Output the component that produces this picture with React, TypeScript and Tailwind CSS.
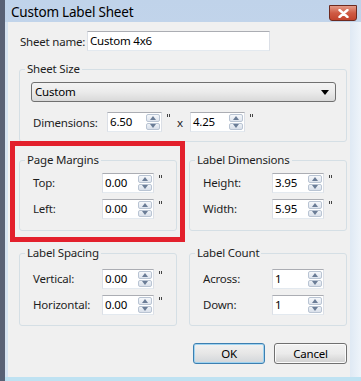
import React from 'react';

function Spinner() {
  return (
    <div className="flex w-[15px] flex-col gap-px py-px pr-px">
      <div className="flex flex-1 items-center justify-center rounded-[2px] border border-[#b9c4d3] bg-gradient-to-b from-[#f6f8fb] to-[#dfe5ee]">
        <svg width="6" height="4" viewBox="0 0 6 4">
          <path d="M3 0 6 4H0z" fill="#6a7c96" />
        </svg>
      </div>
      <div className="flex flex-1 items-center justify-center rounded-[2px] border border-[#b9c4d3] bg-gradient-to-b from-[#eef2f7] to-[#d9e0ea]">
        <svg width="6" height="4" viewBox="0 0 6 4">
          <path d="M0 0h6L3 4z" fill="#6a7c96" />
        </svg>
      </div>
    </div>
  );
}

function SpinBox({ value, wide }: { value: string; wide?: boolean }) {
  return (
    <div
      className={
        'flex h-[20px] border border-[#abadb3] border-x-[#dbdfe6] border-b-[#e3e9ef] bg-white ' +
        (wide ? 'w-[55px]' : 'w-[52px]')
      }
    >
      <span className="flex-1 pl-[2px] leading-[18px] text-black">{value}</span>
      <Spinner />
    </div>
  );
}

function Inch() {
  return (
    <svg width="4" height="4" viewBox="0 0 4 4" className="ml-[5px] self-start mt-[2px]">
      <path d="M0.5 0v3M2.5 0v3" stroke="#444" strokeWidth="1" />
    </svg>
  );
}

function Field({ label, value, inch = true }: { label: string; value: string; inch?: boolean }) {
  return (
    <div className="flex items-center">
      <span className="w-[69px] leading-[20px]">{label}</span>
      <SpinBox value={value} />
      {inch && <Inch />}
    </div>
  );
}

function Group({
  title,
  className,
  children,
}: {
  title: string;
  className?: string;
  children: React.ReactNode;
}) {
  return (
    <fieldset className={'rounded-[3px] border border-[#d5dfe5] ' + (className ?? '')}>
      <legend className="ml-[5px] px-[2px] leading-[16px]">{title}</legend>
      {children}
    </fieldset>
  );
}

export default function App() {
  return (
    <div className="flex h-[381px] w-[361px] overflow-hidden whitespace-nowrap font-['Noto_Sans','DejaVu_Sans',sans-serif] text-[11.5px] tracking-[-0.2px] text-[#1e1e1e]">
      <div className="w-[5px] bg-[#596175]" />
      <div className="flex flex-1 flex-col bg-gradient-to-b from-[#c0d3ea] to-[#d3e2f2]">
        {/* title bar */}
        <div className="flex h-[23px] items-start justify-between pl-[6px] pr-[4px]">
          <span className="pt-[3px] text-[13.5px] leading-[18px] text-black">Custom Label Sheet</span>
          <div className="mt-[5px] flex h-[16px] w-[28px] items-center justify-center rounded-b-[3px] border border-[#6d2a1f] bg-gradient-to-b from-[#e39a88] via-[#cf5b44] to-[#c2432c]">
            <svg width="11" height="9" viewBox="0 0 11 9">
              <path d="M1.5 1 9.5 8M9.5 1 1.5 8" stroke="#fff" strokeWidth="2.4" strokeLinecap="round" />
            </svg>
          </div>
        </div>

        <div className="flex flex-1">
          <div className="w-[3px] bg-[#d7e3f1]" />
          <div className="flex flex-1 flex-col bg-[#f0f0f0] pb-[13px] pl-[11px] pr-[3px] pt-[9px]">
            {/* sheet name */}
            <div className="flex items-center">
              <span className="ml-px w-[67px]">Sheet name:</span>
              <div className="h-[20px] w-[183px] border border-[#abadb3] border-x-[#dbdfe6] border-b-[#e3e9ef] bg-white pl-[2px] leading-[18px] text-black">
                Custom 4x6
              </div>
            </div>

            <Group title="Sheet Size" className="mt-[10px]">
              <div className="pb-[9px] pl-[11px] pr-[10px] pt-[5px]">
                <div className="flex h-[20px] items-center justify-between rounded-[3px] border border-[#707070] bg-gradient-to-b from-[#f3f3f3] via-[#ebebeb] to-[#d9d9d9] pl-[3px] pr-[6px] text-black">
                  <span className="leading-[18px]">Custom</span>
                  <svg width="8" height="5" viewBox="0 0 8 5">
                    <path d="M0 0h8L4 5z" fill="#000" />
                  </svg>
                </div>
                <div className="ml-[2px] mt-[10px] flex items-center">
                  <span className="w-[74px]">Dimensions:</span>
                  <SpinBox value="6.50" wide />
                  <Inch />
                  <span className="ml-[6px] mr-[7px]">x</span>
                  <SpinBox value="4.25" wide />
                  <Inch />
                </div>
              </div>
            </Group>

            <div className="mt-[10px] grid grid-cols-2 gap-x-[12px]">
              <div className="relative">
                <Group title="Page Margins" className="h-full">
                  <div className="flex flex-col gap-[6px] pb-[11px] pl-[13px] pt-[5px]">
                    <Field label="Top:" value="0.00" />
                    <Field label="Left:" value="0.00" />
                  </div>
                </Group>
                {/* red annotation box */}
                <div className="pointer-events-none absolute -left-[9px] -right-[8px] -top-[11px] bottom-[-11px] border-[5px] border-[#e3202c]" />
              </div>
              <Group title="Label Dimensions">
                <div className="flex flex-col gap-[6px] pb-[11px] pl-[13px] pt-[5px]">
                  <Field label="Height:" value="3.95" />
                  <Field label="Width:" value="5.95" />
                </div>
              </Group>
            </div>

            <div className="mt-[14px] grid grid-cols-2 gap-x-[12px]">
              <Group title="Label Spacing">
                <div className="flex flex-col gap-[6px] pb-[10px] pl-[13px] pt-[8px]">
                  <Field label="Vertical:" value="0.00" />
                  <Field label="Horizontal:" value="0.00" />
                </div>
              </Group>
              <Group title="Label Count">
                <div className="flex flex-col gap-[6px] pb-[10px] pl-[13px] pt-[8px]">
                  <Field label="Across:" value="1" inch={false} />
                  <Field label="Down:" value="1" inch={false} />
                </div>
              </Group>
            </div>

            <div className="mt-[17px] flex justify-end gap-[9px]">
              <button className="h-[21px] w-[72px] rounded-[3px] border border-[#3c7fb1] bg-gradient-to-b from-[#f2f2f2] via-[#e6e6e6] to-[#d2d6da] leading-[19px] text-black shadow-[inset_0_0_0_1px_#9fd3f0]">
                OK
              </button>
              <button className="h-[21px] w-[73px] rounded-[3px] border border-[#707070] bg-gradient-to-b from-[#f2f2f2] via-[#ebebeb] to-[#d0d0d0] leading-[19px] text-black shadow-[inset_0_0_0_1px_#fbfbfb]">
                Cancel
              </button>
            </div>
          </div>
          <div className="w-[11px] bg-gradient-to-r from-[#dfe9f4] to-[#eef4fa]" />
        </div>
        <div className="h-[4px] bg-[#bfe2f2]" />
      </div>
    </div>
  );
}
